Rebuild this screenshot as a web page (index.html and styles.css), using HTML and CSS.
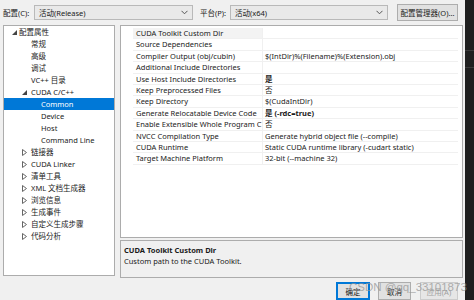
FILE: index.html
```html
<!DOCTYPE html>
<html>
<head>
<meta charset="utf-8">
<link rel="stylesheet" href="styles.css">
</head>
<body>
<div class="window">
  <div class="dialog">
    <div class="toolbar">
      <span class="lbl lbl-conf">配置(C):</span>
      <div class="combo combo-conf"><span>活动(Release)</span><svg class="chev" width="7" height="5" viewBox="0 0 7 5"><path d="M0.5 0.8 L3.5 3.8 L6.5 0.8" fill="none" stroke="#555" stroke-width="1"/></svg></div>
      <span class="lbl lbl-plat">平台(P):</span>
      <div class="combo combo-plat"><span>活动(x64)</span><svg class="chev" width="7" height="5" viewBox="0 0 7 5"><path d="M0.5 0.8 L3.5 3.8 L6.5 0.8" fill="none" stroke="#555" stroke-width="1"/></svg></div>
      <div class="btn btn-mgr">配置管理器(O)...</div>
    </div>
    <div class="main">
      <div class="tree">
        <div class="node l0"><svg class="arr" width="5" height="5" viewBox="0 0 5 5"><path d="M5 0 L5 5 L0 5 Z" fill="#444"/></svg><span>配置属性</span></div>
        <div class="node l1n">常规</div>
        <div class="node l1n">高级</div>
        <div class="node l1n">调试</div>
        <div class="node l1n">VC++ 目录</div>
        <div class="node l1"><svg class="arr" width="5" height="5" viewBox="0 0 5 5"><path d="M5 0 L5 5 L0 5 Z" fill="#444"/></svg><span>CUDA C/C++</span></div>
        <div class="node l2 sel">Common</div>
        <div class="node l2">Device</div>
        <div class="node l2">Host</div>
        <div class="node l2">Command Line</div>
        <div class="node l1"><svg class="arr" width="5" height="7" viewBox="0 0 5 7"><path d="M0.5 0.5 L4.5 3.5 L0.5 6.5 Z" fill="none" stroke="#666" stroke-width="1"/></svg><span>链接器</span></div>
        <div class="node l1"><svg class="arr" width="5" height="7" viewBox="0 0 5 7"><path d="M0.5 0.5 L4.5 3.5 L0.5 6.5 Z" fill="none" stroke="#666" stroke-width="1"/></svg><span>CUDA Linker</span></div>
        <div class="node l1"><svg class="arr" width="5" height="7" viewBox="0 0 5 7"><path d="M0.5 0.5 L4.5 3.5 L0.5 6.5 Z" fill="none" stroke="#666" stroke-width="1"/></svg><span>清单工具</span></div>
        <div class="node l1"><svg class="arr" width="5" height="7" viewBox="0 0 5 7"><path d="M0.5 0.5 L4.5 3.5 L0.5 6.5 Z" fill="none" stroke="#666" stroke-width="1"/></svg><span>XML 文档生成器</span></div>
        <div class="node l1"><svg class="arr" width="5" height="7" viewBox="0 0 5 7"><path d="M0.5 0.5 L4.5 3.5 L0.5 6.5 Z" fill="none" stroke="#666" stroke-width="1"/></svg><span>浏览信息</span></div>
        <div class="node l1"><svg class="arr" width="5" height="7" viewBox="0 0 5 7"><path d="M0.5 0.5 L4.5 3.5 L0.5 6.5 Z" fill="none" stroke="#666" stroke-width="1"/></svg><span>生成事件</span></div>
        <div class="node l1"><svg class="arr" width="5" height="7" viewBox="0 0 5 7"><path d="M0.5 0.5 L4.5 3.5 L0.5 6.5 Z" fill="none" stroke="#666" stroke-width="1"/></svg><span>自定义生成步骤</span></div>
        <div class="node l1"><svg class="arr" width="5" height="7" viewBox="0 0 5 7"><path d="M0.5 0.5 L4.5 3.5 L0.5 6.5 Z" fill="none" stroke="#666" stroke-width="1"/></svg><span>代码分析</span></div>
      </div>
      <div class="right">
        <div class="grid">
          <div class="row first"><div class="k">CUDA Toolkit Custom Dir</div><div class="v"></div></div>
          <div class="row"><div class="k">Source Dependencies</div><div class="v"></div></div>
          <div class="row"><div class="k">Compiler Output (obj/cubin)</div><div class="v">$(IntDir)%(Filename)%(Extension).obj</div></div>
          <div class="row"><div class="k">Additional Include Directories</div><div class="v"></div></div>
          <div class="row"><div class="k">Use Host Include Directories</div><div class="v b">是</div></div>
          <div class="row"><div class="k">Keep Preprocessed Files</div><div class="v">否</div></div>
          <div class="row"><div class="k">Keep Directory</div><div class="v">$(CudaIntDir)</div></div>
          <div class="row"><div class="k">Generate Relocatable Device Code</div><div class="v b">是 (-rdc=true)</div></div>
          <div class="row"><div class="k">Enable Extensible Whole Program C</div><div class="v">否</div></div>
          <div class="row"><div class="k">NVCC Compilation Type</div><div class="v">Generate hybrid object file (--compile)</div></div>
          <div class="row"><div class="k">CUDA Runtime</div><div class="v">Static CUDA runtime library (-cudart static)</div></div>
          <div class="row"><div class="k">Target Machine Platform</div><div class="v">32-bit (--machine 32)</div></div>
        </div>
        <div class="desc">
          <div class="desc-title">CUDA Toolkit Custom Dir</div>
          <div class="desc-text">Custom path to the CUDA Toolkit.</div>
        </div>
      </div>
    </div>
    <div class="buttons">
      <div class="btn btn-ok">确定</div>
      <div class="btn btn-cancel">取消</div>
      <div class="btn btn-apply">应用(A)</div>
    </div>
    <div class="watermark">CSDN @qq_33101873</div>
  </div>
  <div class="side">
    <div class="side-line"></div>
    <div class="side-line2"></div>
  </div>
</div>
</body>
</html>
```

FILE: styles.css
```css
* { box-sizing: border-box; }
html, body { margin: 0; padding: 0; }
body {
  width: 474px;
  height: 300px;
  overflow: hidden;
  font-family: "Noto Sans", "Noto Sans CJK SC", sans-serif;
  font-size: 7.5px;
  color: #1a1a1a;
  background: #f0f0f0;
}
.window { display: flex; width: 474px; height: 300px; }
.dialog {
  position: relative;
  width: 465px;
  height: 300px;
  background: #f0f0f0;
  display: flex;
  flex-direction: column;
}
.side {
  width: 9px;
  height: 300px;
  background: #1f1f1f;
  display: flex;
  flex-direction: column;
}
.side-line { margin-top: 50px; height: 1px; background: #3a3a3a; }
.side-line2 { margin-top: 16px; height: 1px; background: #3a3a3a; }

.toolbar {
  display: flex;
  align-items: center;
  height: 24px;
  padding: 3px 0 0 3px;
}
.lbl { white-space: nowrap; }
.lbl-conf { width: 31px; }
.lbl-plat { width: 30px; margin-left: 7px; }
.combo {
  height: 15px;
  border: 1px solid #b9b9b9;
  background: #e9e9e9;
  display: flex;
  align-items: center;
  justify-content: space-between;
  padding: 0 4px 0 4px;
}
.combo-conf { width: 159px; }
.combo-plat { width: 158px; }
.btn {
  height: 17px;
  border: 1px solid #adadad;
  background: #e1e1e1;
  display: flex;
  align-items: center;
  justify-content: center;
  white-space: nowrap;
}
.btn-mgr { width: 61px; margin-left: 9px; }

.main {
  display: flex;
  margin-top: 3px;
  gap: 5px;
  padding-left: 3px;
}
.tree {
  width: 112px;
  height: 251px;
  border: 1px solid #acacac;
  background: #fff;
  padding-top: 0;
}
.node {
  height: 12px;
  line-height: 12px;
  white-space: nowrap;
  display: flex;
  align-items: center;
}
.node .arr { flex: none; }
.l0 { padding-left: 8px; }
.l0 span { margin-left: 2px; }
.l1n { padding-left: 27px; }
.l1 { padding-left: 18px; }
.l1 span { margin-left: 4px; }
.l2 { padding-left: 37px; }
.sel { background: #0078d7; color: #fff; }

.right {
  width: 343px;
  display: flex;
  flex-direction: column;
  gap: 2px;
}
.grid {
  height: 213px;
  border: 1px solid #acacac;
  background: #fff;
  padding: 2px 4px 0 12px;
}
.row {
  display: flex;
  height: 11.4px;
  line-height: 11px;
  border-bottom: 1px solid #f0f0f0;
}
.k {
  width: 130px;
  padding-left: 3px;
  white-space: nowrap;
  overflow: hidden;
  border-right: 1px solid #f0f0f0;
}
.first .k { background: #f3f3f3; }
.v {
  flex: 1;
  padding-left: 2px;
  white-space: nowrap;
  overflow: hidden;
}
.b { font-weight: bold; }

.desc {
  height: 38px;
  border: 1px solid #acacac;
  background: #f0f0f0;
  padding: 4px 3px;
  line-height: 11px;
}
.desc-title { font-weight: bold; }

.buttons {
  display: flex;
  gap: 8px;
  margin-top: 4px;
  padding-left: 336px;
}
.btn-ok { width: 34px; border: 1px solid #0078d7; box-shadow: inset 0 0 0 1px #0078d7; height: 18px; }
.btn-cancel { width: 33px; height: 18px; }
.btn-apply { width: 38px; height: 18px; color: #a0a0a0; border-color: #cccccc; background: #e6e6e6; margin-left: 1px; }

.watermark {
  position: absolute;
  left: 349px;
  top: 281px;
  font-size: 11.5px;
  color: rgba(150, 150, 150, 0.75);
  white-space: nowrap;
  font-family: "Liberation Sans", sans-serif;
}
```
